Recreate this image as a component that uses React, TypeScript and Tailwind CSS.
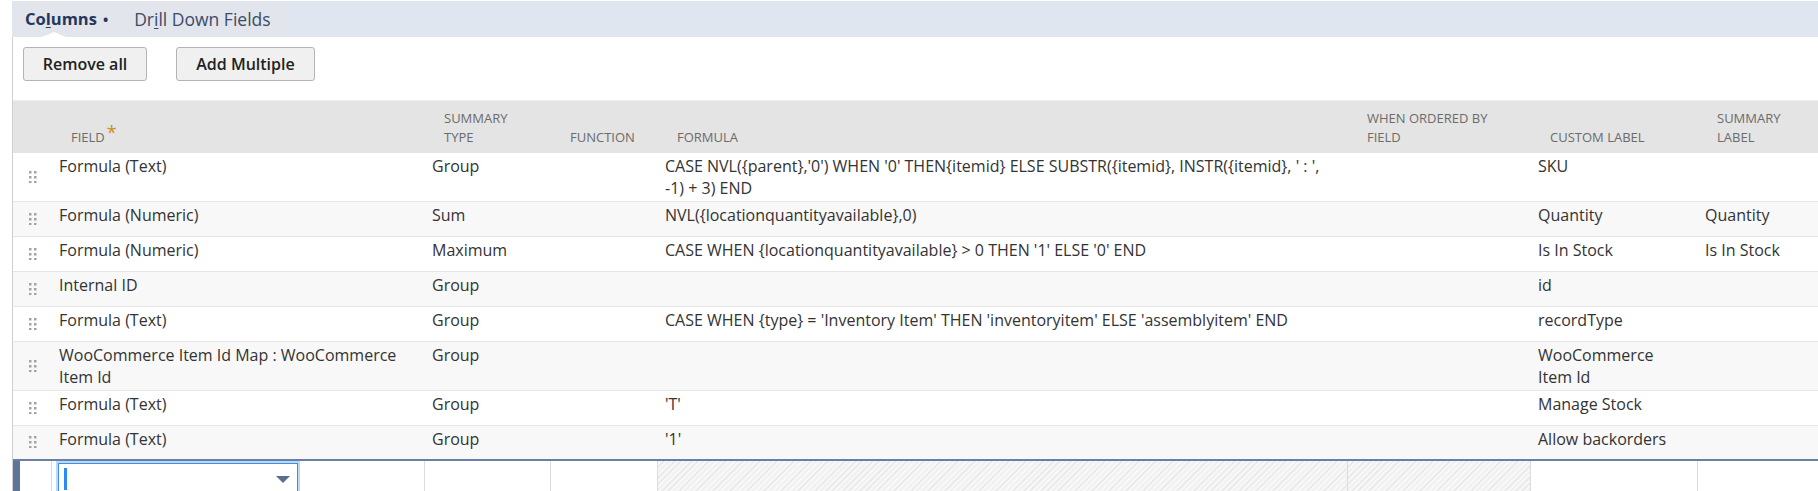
import React from 'react';

type Row = {
  field: string[];
  summary: string;
  formula: string[];
  label: string[];
  summaryLabel: string;
};

const rows: Row[] = [
  {
    field: ['Formula (Text)'],
    summary: 'Group',
    formula: [
      "CASE NVL({parent},'0') WHEN '0' THEN{itemid} ELSE SUBSTR({itemid}, INSTR({itemid}, ' : ',",
      '-1) + 3) END',
    ],
    label: ['SKU'],
    summaryLabel: '',
  },
  {
    field: ['Formula (Numeric)'],
    summary: 'Sum',
    formula: ['NVL({locationquantityavailable},0)'],
    label: ['Quantity'],
    summaryLabel: 'Quantity',
  },
  {
    field: ['Formula (Numeric)'],
    summary: 'Maximum',
    formula: ["CASE WHEN {locationquantityavailable} > 0 THEN '1' ELSE '0' END"],
    label: ['Is In Stock'],
    summaryLabel: 'Is In Stock',
  },
  { field: ['Internal ID'], summary: 'Group', formula: [], label: ['id'], summaryLabel: '' },
  {
    field: ['Formula (Text)'],
    summary: 'Group',
    formula: ["CASE WHEN {type} = 'Inventory Item' THEN 'inventoryitem' ELSE 'assemblyitem' END"],
    label: ['recordType'],
    summaryLabel: '',
  },
  {
    field: ['WooCommerce Item Id Map : WooCommerce', 'Item Id'],
    summary: 'Group',
    formula: [],
    label: ['WooCommerce', 'Item Id'],
    summaryLabel: '',
  },
  { field: ['Formula (Text)'], summary: 'Group', formula: ["'T'"], label: ['Manage Stock'], summaryLabel: '' },
  { field: ['Formula (Text)'], summary: 'Group', formula: ["'1'"], label: ['Allow backorders'], summaryLabel: '' },
];

const Lines = ({ lines }: { lines: string[] }) => (
  <>
    {lines.map((l, i) => (
      <span key={i} className="block whitespace-nowrap">
        {l}
      </span>
    ))}
  </>
);

const DragHandle = () => (
  <svg width="8" height="12" viewBox="0 0 8 12" className="ml-[16px]">
    {[0, 5, 10].map((y) =>
      [0, 5].map((x) => <rect key={`${x}-${y}`} x={x} y={y} width="2.5" height="2.5" fill="#a3a3a3" />)
    )}
  </svg>
);

const hatch =
  'bg-[repeating-linear-gradient(135deg,#e6e6e6_0px,#e6e6e6_1px,#f7f7f7_1px,#f7f7f7_4px)]';

const App: React.FC = () => {
  const th = 'pl-[20px] pb-[6px] align-bottom text-left font-normal uppercase text-[13px] leading-[19px] text-[#6b6b6b]';
  const td = 'h-[35px] pt-[2px] pb-[2px] pl-[8px] align-top border-b border-[#e6e6e6]';
  const editTd = 'border-t-2 border-t-[#6a7fa6] border-r border-r-[#dcdcdc]';

  return (
    <div className="w-[1818px] h-[491px] overflow-hidden bg-white font-['Open_Sans',sans-serif] text-[16px] text-[#333]">
      {/* tab strip */}
      <div className="pt-px">
        <div className="ml-[12px] h-[36px] flex bg-[#dfe6f0]">
          <div className="flex items-center bg-[#e2e5eb] w-[276px]">
            <div className="relative h-full flex items-center pl-[13px] pr-[16px] font-bold text-[16.5px] text-[#24385b]">
              <span>
                Co<span className="underline underline-offset-2">l</span>umns
              </span>
              <span className="ml-[6px] text-[14px]">•</span>
              {/* active pointer */}
              <span className="absolute bottom-0 left-[30px] w-0 h-0 border-l-[12px] border-r-[12px] border-b-[5px] border-l-transparent border-r-transparent border-b-white" />
            </div>
            <div className="h-full flex items-center pl-[10px] text-[17.5px] text-[#3b4b68]">
              Dr<span className="underline underline-offset-2">i</span>ll Down Fields
            </div>
          </div>
        </div>
      </div>

      {/* panel */}
      <div className="ml-[12px] border-l border-[#cfcfcf] h-full">
        <div className="flex gap-[29px] pl-[10px] pt-[10px] pb-[19px]">
          <button className="w-[124px] h-[34px] rounded-[3px] border border-[#b4b4b4] bg-[#f0f0f0] font-semibold text-[16px] text-[#222]">
            Remove all
          </button>
          <button className="w-[139px] h-[34px] rounded-[3px] border border-[#b4b4b4] bg-[#f0f0f0] font-semibold text-[16px] text-[#222]">
            Add Multiple
          </button>
        </div>

        <table className="table-fixed border-collapse w-[1805px]">
          <colgroup>
            <col className="w-[38px]" />
            <col className="w-[373px]" />
            <col className="w-[126px]" />
            <col className="w-[107px]" />
            <col className="w-[690px]" />
            <col className="w-[183px]" />
            <col className="w-[167px]" />
            <col className="w-[121px]" />
          </colgroup>
          <thead>
            <tr className="h-[52px] bg-[#e4e4e4] border-t border-[#efefef]">
              <th className={th}></th>
              <th className={th}>
                Field
                <span className="ml-[2px] text-[#d48a1c] text-[18px] leading-none align-[3px]">*</span>
              </th>
              <th className={th}>
                Summary
                <br />
                Type
              </th>
              <th className={th}>Function</th>
              <th className={th}>Formula</th>
              <th className={th}>
                When ordered by
                <br />
                Field
              </th>
              <th className={th}>Custom Label</th>
              <th className={th}>
                Summary
                <br />
                Label
              </th>
            </tr>
          </thead>
          <tbody className="leading-[22px]">
            {rows.map((r, i) => (
              <tr key={i} className={i % 2 === 1 ? 'bg-[#f8f8f8]' : 'bg-white'}>
                <td className="h-[35px] align-middle border-b border-[#e6e6e6]">
                  <DragHandle />
                </td>
                <td className={td}>
                  <Lines lines={r.field} />
                </td>
                <td className={td}>{r.summary}</td>
                <td className={td}></td>
                <td className={td}>
                  <Lines lines={r.formula} />
                </td>
                <td className={td}></td>
                <td className={td}>
                  <Lines lines={r.label} />
                </td>
                <td className={td}>{r.summaryLabel}</td>
              </tr>
            ))}
            {/* row being edited */}
            <tr className="h-[40px] bg-white">
              <td className={`${editTd} shadow-[inset_7px_0_0_#5f7499]`}></td>
              <td className={`${editTd} align-top pt-[2px] pl-[6px]`}>
                <div className="w-[240px] h-[32px] flex items-center justify-between border border-[#3d8ee8] shadow-[0_0_0_2px_#bcd8f7] bg-white pl-[5px] pr-[7px]">
                  <span className="w-[3px] h-[22px] bg-[#2c8af0]" />
                  <span className="w-0 h-0 border-l-[7px] border-r-[7px] border-t-[7px] border-l-transparent border-r-transparent border-t-[#5a6e8e]" />
                </div>
              </td>
              <td className={editTd}></td>
              <td className={editTd}></td>
              <td className={`${editTd} ${hatch}`}></td>
              <td className={`${editTd} ${hatch}`}></td>
              <td className={editTd}></td>
              <td className="border-t-2 border-t-[#6a7fa6]"></td>
            </tr>
          </tbody>
        </table>
      </div>
    </div>
  );
};

export default App;
